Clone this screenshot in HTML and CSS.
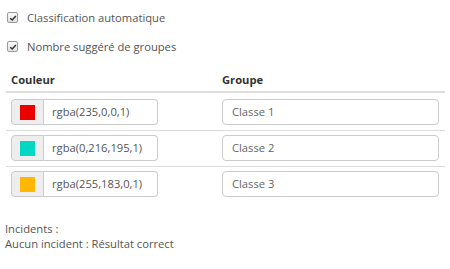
FILE: index.html
```html
<!DOCTYPE html>
<html lang="fr">
<head>
<meta charset="utf-8">
<link rel="stylesheet" href="styles.css">
</head>
<body>
<div class="page">
  <label class="check-row"><span class="check"><svg viewBox="0 0 10 10" width="8" height="8"><path d="M1.5 5.2 L4 7.6 L8.6 2.4" fill="none" stroke="#333" stroke-width="1.8"/></svg></span>Classification automatique</label>
  <label class="check-row"><span class="check"><svg viewBox="0 0 10 10" width="8" height="8"><path d="M1.5 5.2 L4 7.6 L8.6 2.4" fill="none" stroke="#333" stroke-width="1.8"/></svg></span>Nombre suggéré de groupes</label>

  <div class="table">
    <div class="row head">
      <div class="c1">Couleur</div>
      <div class="c2">Groupe</div>
    </div>
    <div class="row first">
      <div class="c1"><div class="color"><span class="addon"><span class="sw red"></span></span><span class="val">rgba(235,0,0,1)</span></div></div>
      <div class="c2"><div class="field">Classe 1</div></div>
    </div>
    <div class="row">
      <div class="c1"><div class="color"><span class="addon"><span class="sw teal"></span></span><span class="val">rgba(0,216,195,1)</span></div></div>
      <div class="c2"><div class="field">Classe 2</div></div>
    </div>
    <div class="row last">
      <div class="c1"><div class="color"><span class="addon"><span class="sw amber"></span></span><span class="val">rgba(255,183,0,1)</span></div></div>
      <div class="c2"><div class="field">Classe 3</div></div>
    </div>
  </div>

  <div class="incidents">
    <div>Incidents :</div>
    <div>Aucun incident : Résultat correct</div>
  </div>
</div>
</body>
</html>
```
FILE: styles.css
```css
html, body {
  margin: 0;
  padding: 0;
  background: #fff;
}
body {
  font-family: "Open Sans", "Noto Sans", sans-serif;
  font-size: 11.2px;
  color: #555;
}
.page {
  padding: 0 5px 0 7px;
}
.check-row {
  display: flex;
  align-items: center;
  gap: 9px;
  height: 29px;
  line-height: 16px;
  padding-top: 3px;
}
.check-row + .check-row {
  padding-top: 0;
}
.check {
  width: 11px;
  height: 11px;
  box-sizing: border-box;
  border: 1px solid #9a9a9a;
  border-radius: 2px;
  background: linear-gradient(#fafafa, #e2e2e2);
  display: flex;
  align-items: center;
  justify-content: center;
}
.table {
  margin-top: 8px;
  margin-left: -1px;
  width: 439px;
}
.row {
  display: flex;
  border-bottom: 1px solid #ddd;
  padding: 4px 0 5px;
}
.row.first {
  padding-top: 6px;
}
.row.last {
  border-bottom: none;
}
.row.head {
  border-bottom: 2px solid #ddd;
  padding: 3px 0 3px;
  font-weight: bold;
  color: #333;
  line-height: 16px;
}
.c1 {
  width: 211px;
  padding-left: 5px;
  box-sizing: border-box;
}
.c2 {
  flex: 1;
  padding-left: 5px;
  padding-right: 6px;
}
.color {
  display: flex;
  width: 147px;
  height: 26px;
  box-sizing: border-box;
}
.addon {
  width: 33px;
  box-sizing: border-box;
  background: #eee;
  border: 1px solid #ccc;
  border-radius: 4px 0 0 4px;
  display: flex;
  align-items: center;
  justify-content: center;
}
.sw {
  width: 15px;
  height: 15px;
}
.red { background: rgb(235,0,0); }
.teal { background: rgb(0,216,195); }
.amber { background: rgb(255,183,0); }
.val {
  flex: 1;
  border: 1px solid #ccc;
  border-left: none;
  border-radius: 0 4px 4px 0;
  padding-left: 8px;
  line-height: 24px;
}
.field {
  height: 26px;
  box-sizing: border-box;
  border: 1px solid #ccc;
  border-radius: 4px;
  padding-left: 9px;
  line-height: 24px;
  color: #666;
}
.incidents {
  margin-top: 19px;
  margin-left: -2px;
  line-height: 15px;
}
```
